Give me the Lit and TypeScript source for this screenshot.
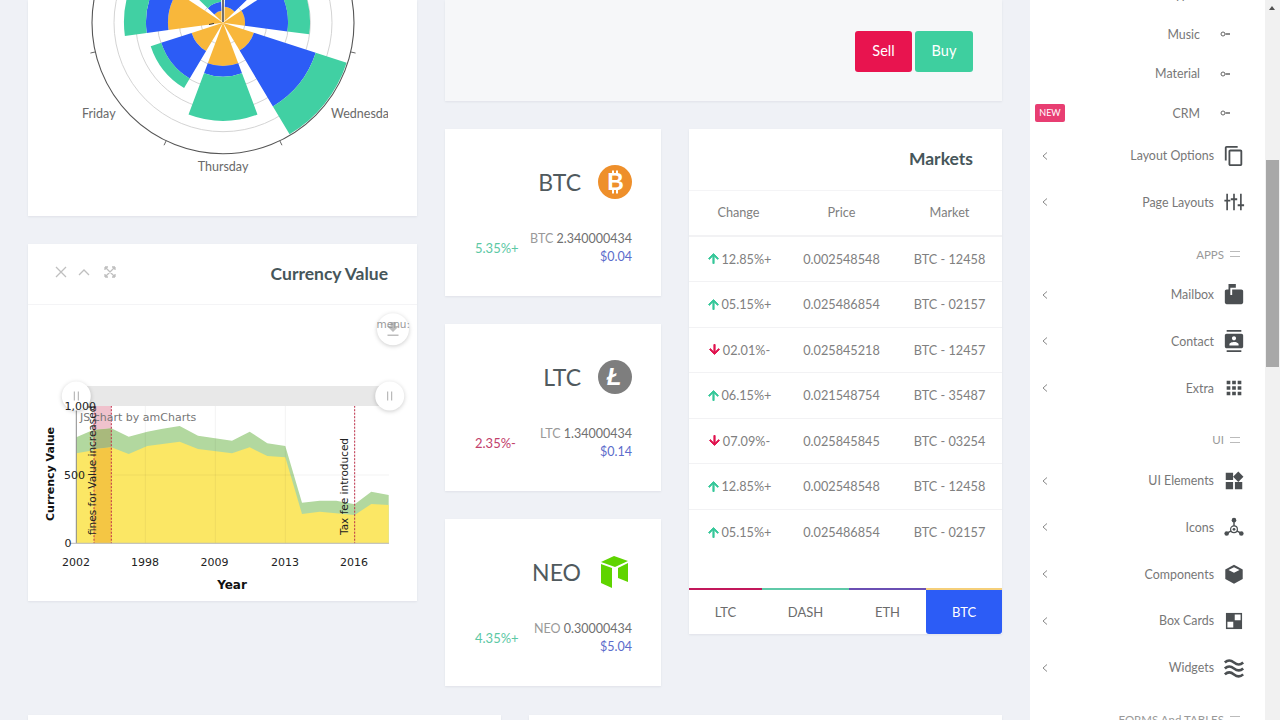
import { LitElement, html, svg, css } from 'lit';
import { customElement } from 'lit/decorators.js';

// --- polar chart helpers ---
const CX = 195;
const CY = 22.7;

const polar = (r: number, deg: number) => {
  const a = (deg * Math.PI) / 180;
  return [CX + r * Math.sin(a), CY - r * Math.cos(a)];
};

const sector = (r0: number, r1: number, a0: number, a1: number) => {
  const [x0, y0] = polar(r1, a0);
  const [x1, y1] = polar(r1, a1);
  const [x2, y2] = polar(r0, a1);
  const [x3, y3] = polar(r0, a0);
  return `M${x0} ${y0}A${r1} ${r1} 0 0 1 ${x1} ${y1}L${x2} ${y2}A${r0} ${r0} 0 0 0 ${x3} ${y3}Z`;
};

// center angle, then the outer radius of each stacked band
const DAYS = [
  { a: 25.7, v: [16, 75, 95] },
  { a: 77.1, v: [22, 65, 87] },
  { a: 128.6, v: [32.5, 97.5, 130] },
  { a: 180, v: [43.3, 54, 98] },
  { a: 231.4, v: [33, 65, 76] },
  { a: 282.9, v: [55, 77, 99] },
  { a: 334.3, v: [12, 21, 40] },
];
const BANDS = ['#f8b73b', '#2c5cf6', '#41d0a3'];

// --- area chart: points read off the plot, 3x scale ---
const P = (x: number, y: number) => `${(x / 3).toFixed(1)},${(y / 3 - 65).toFixed(1)}`;
const poly = (pts: number[][]) => pts.map(p => P(p[0], p[1])).join(' ');

const YELLOW = [[145, 640], [250, 622], [302, 642], [358, 618], [455, 605], [510, 627], [612, 640], [665, 622], [718, 648], [772, 652], [822, 822], [875, 815], [980, 825], [1030, 792], [1082, 795]];
const GREEN = [[145, 592], [200, 568], [250, 565], [302, 590], [358, 575], [400, 567], [455, 558], [510, 587], [612, 602], [665, 575], [718, 610], [772, 618], [822, 788], [875, 782], [925, 782], [980, 793], [1030, 755], [1082, 765]];

const COINS = [
  { name: 'BTC', logo: 'btc', change: '5.35%+', up: true, amount: '2.340000434', usd: '$0.04' },
  { name: 'LTC', logo: 'ltc', change: '2.35%-', up: false, amount: '1.34000434', usd: '$0.14' },
  { name: 'NEO', logo: 'neo', change: '4.35%+', up: true, amount: '0.30000434', usd: '$5.04' },
];

const MARKETS = [
  { change: '12.85%+', up: true, price: '0.002548548', market: 'BTC - 12458' },
  { change: '05.15%+', up: true, price: '0.025486854', market: 'BTC - 02157' },
  { change: '02.01%-', up: false, price: '0.025845218', market: 'BTC - 12457' },
  { change: '06.15%+', up: true, price: '0.021548754', market: 'BTC - 35487' },
  { change: '07.09%-', up: false, price: '0.025845845', market: 'BTC - 03254' },
  { change: '12.85%+', up: true, price: '0.002548548', market: 'BTC - 12458' },
  { change: '05.15%+', up: true, price: '0.025486854', market: 'BTC - 02157' },
];

const TABS = [
  { label: 'LTC', w: 73, color: '#c2185b', active: false },
  { label: 'DASH', w: 87, color: '#5fc9a8', active: false },
  { label: 'ETH', w: 77, color: '#6a4fb3', active: false },
  { label: 'BTC', w: 76, color: '#f5cf7a', active: true },
];

// material style 24x24 icons, plus a few drawn by hand
const ICONS: Record<string, unknown> = {
  copy: svg`<path d="M16 1H4c-1.1 0-2 .9-2 2v14h2V3h12V1zm3 4H8c-1.1 0-2 .9-2 2v14c0 1.1.9 2 2 2h11c1.1 0 2-.9 2-2V7c0-1.1-.9-2-2-2zm0 16H8V7h11v14z"/>`,
  tune: svg`<path d="M3.600 3h1.800v6.500H8v2H5.400V21H3.600v-9.500H1.500v-2h2.100zM11.100 3h1.800v5H15.500v2h-2.600v11h-1.800V10H8.500V8h2.600zM18.600 3h1.800v11.500H23v2h-2.600V21h-1.800v-4.500H16v-2h2.600z"/>`,
  mailbox: svg`<path d="M20 6H10v6H8V4h6V0H6v6H4c-1.1 0-2 .9-2 2v12c0 1.1.9 2 2 2h16c1.1 0 2-.9 2-2V8c0-1.1-.9-2-2-2z"/>`,
  contact: svg`<path d="M20 0H4v2h16V0zM4 24h16v-2H4v2zM20 4H4c-1.1 0-2 .9-2 2v12c0 1.1.9 2 2 2h16c1.1 0 2-.9 2-2V6c0-1.1-.9-2-2-2zm-8 2.750c1.240 0 2.250 1.010 2.250 2.250s-1.010 2.250-2.250 2.250S9.750 10.240 9.750 9 10.760 6.750 12 6.750zM17 17H7v-1.500c0-1.670 3.330-2.500 5-2.500s5 .83 5 2.500V17z"/>`,
  apps: svg`<path d="M4 8h4V4H4v4zm6 12h4v-4h-4v4zm-6 0h4v-4H4v4zm0-6h4v-4H4v4zm6 0h4v-4h-4v4zm6-10v4h4V4h-4zm-6 4h4V4h-4v4zm6 6h4v-4h-4v4zm0 6h4v-4h-4v4z"/>`,
  widgets: svg`<path d="M13 13v8h8v-8h-8zM3 21h8v-8H3v8zM3 3v8h8V3H3zm13.660-1.310L11 7.340 16.660 13l5.660-5.660-5.660-5.650z"/>`,
  hub: svg`<circle cx="12" cy="4.500" r="2.500"/><circle cx="4" cy="19" r="2.500"/><circle cx="20" cy="19" r="2.500"/><circle cx="12" cy="14.500" r="1.500"/><circle cx="12" cy="14.500" r="3.700" fill="none" stroke="currentColor" stroke-width="1.300"/><path fill="none" stroke="currentColor" stroke-width="1.600" d="M12 6v5M5 18.500l4-2.300M19 18.500l-4-2.300"/>`,
  cube: svg`<path d="M12 2l9.500 5v10.500L12 22.500l-9.500-5V7z"/><path fill="#fff" d="M12 4.500L18 7.600 12 10.700 6 7.600z"/>`,
  cards: svg`<path d="M3.200 3.200h17.600v17.600H3.200z"/><path fill="#fff" d="M12.800 4.800h6.400v6.400h-6.400zM4.800 12.800h6.400v6.400H4.800z"/>`,
  waves: svg`<path fill="none" stroke="currentColor" stroke-width="2.800" d="M2 6c3-2.800 6.500-2.800 10 0s7 2.800 10 0M2 12.500c3-2.800 6.500-2.800 10 0s7 2.800 10 0M2 19c3-2.800 6.500-2.800 10 0s7 2.800 10 0"/>`,
};

const SUB_ITEMS = ['Crypto', 'Music', 'Material', 'CRM'];

const NAV = [
  { group: '', items: [['Layout Options', 'copy'], ['Page Layouts', 'tune']] },
  { group: 'APPS', items: [['Mailbox', 'mailbox'], ['Contact', 'contact'], ['Extra', 'apps']] },
  { group: 'UI', items: [['UI Elements', 'widgets'], ['Icons', 'hub'], ['Components', 'cube'], ['Box Cards', 'cards'], ['Widgets', 'waves']] },
  { group: 'FORMS And TABLES', items: [] },
];

@customElement('app-root')
export class AppRoot extends LitElement {
  static styles = css`
    :host {
      display: block;
      width: 1280px;
      height: 720px;
      overflow: hidden;
      background: #eff1f6;
      font-family: Lato, 'Open Sans', sans-serif;
      color: #777;
    }
    .page {
      display: grid;
      grid-template-columns: 1030px 235px 15px;
      height: 720px;
    }
    .main {
      padding: 0 28px;
    }
    .card {
      background: #fff;
      box-shadow: 0 1px 2px rgba(90, 100, 120, 0.1);
    }
    .columns {
      display: grid;
      grid-template-columns: 389px 557px;
      gap: 28px;
    }
    .stack {
      display: flex;
      flex-direction: column;
      gap: 28px;
    }
    .polar {
      height: 216px;
    }
    .polar svg {
      display: block;
      width: 360px;
      height: 216px;
    }
    .polar text {
      font-size: 12.5px;
      fill: #6a6a6a;
    }
    .currency {
      height: 357px;
    }
    .card-head {
      display: flex;
      align-items: center;
      justify-content: space-between;
      height: 61px;
      padding: 0 29px 0 27px;
      border-bottom: 1px solid #f4f4f6;
      box-sizing: border-box;
    }
    .card-head svg {
      display: block;
      margin-top: -4px;
    }
    .title {
      font-size: 17.5px;
      font-weight: 700;
      color: #46565a;
      margin-top: -2px;
    }
    .area {
      display: block;
      width: 389px;
      height: 296px;
    }
    .area text {
      font-family: 'DejaVu Sans', sans-serif;
      font-size: 11px;
      fill: #222;
    }
    .area .axis {
      font-weight: 700;
      fill: #111;
    }
    .area .credit {
      fill: #777;
    }
    .area .note {
      font-size: 10.5px;
    }
    .area .menu-label {
      font-size: 10.5px;
      fill: #999;
    }
    .area .year {
      font-size: 12px;
    }
    .area .value {
      font-size: 11px;
    }
    .handle {
      filter: drop-shadow(0 1px 2px rgba(0, 0, 0, 0.2));
    }
    .trade {
      display: flex;
      justify-content: flex-end;
      gap: 3px;
      height: 101px;
      box-sizing: border-box;
      padding: 31px 29px 0 0;
      background: #f6f7f9;
    }
    .trade button {
      height: 41px;
      padding: 0 0 2px;
      border: 0;
      border-radius: 3px;
      font: inherit;
      font-size: 14.5px;
      color: #fff;
    }
    .sell {
      width: 57px;
      background: #e8144f;
    }
    .buy {
      width: 58px;
      background: #3ecf9f;
    }
    .lower {
      display: grid;
      grid-template-columns: 216px 313px;
      gap: 28px;
      align-items: start;
    }
    .coin {
      height: 167px;
      box-sizing: border-box;
      padding: 35px 29px 0 30px;
    }
    .coin-top {
      display: flex;
      align-items: center;
      justify-content: flex-end;
      gap: 17px;
      height: 36px;
      font-size: 23px;
      color: #505a5e;
    }
    .coin-top svg {
      display: block;
    }
    .coin-bottom {
      display: flex;
      justify-content: space-between;
      align-items: center;
      margin-top: 30px;
      font-size: 13px;
      line-height: 18px;
    }
    .up {
      color: #5cc8a4;
    }
    .down {
      color: #c2406b;
    }
    .amount {
      text-align: right;
      color: #707070;
      font-size: 12.5px;
    }
    .amount span {
      color: #999;
    }
    .usd {
      color: #5c6ccb;
    }
    .markets {
      height: 505px;
      display: flex;
      flex-direction: column;
    }
    .markets .card-head {
      justify-content: flex-end;
      height: 61.5px;
    }
    .grid-row {
      display: grid;
      grid-template-columns: 99px 107px 107px;
      align-items: center;
      text-align: center;
      font-size: 12.7px;
      color: #808080;
      height: 45.5px;
      box-sizing: border-box;
      border-bottom: 1px solid #f2f2f4;
    }
    .grid-row > span:last-child {
      padding-left: 2px;
    }
    .rows .grid-row:last-child {
      border-bottom: 0;
    }
    .grid-row.heading {
      height: 46px;
      padding-bottom: 2px;
      border-bottom: 2px solid #f2f2f4;
    }
    .change {
      display: flex;
      align-items: center;
      justify-content: center;
      gap: 1px;
    }
    .change svg {
      display: block;
      flex: none;
    }
    .rows {
      flex: 1;
    }
    .tabs {
      display: flex;
      height: 46px;
      font-size: 13px;
      color: #6c6c6c;
    }
    .tab {
      box-sizing: border-box;
      display: flex;
      align-items: center;
      justify-content: center;
      border-top: 2px solid;
    }
    .tab.active {
      background: #2c5cf6;
      color: #fff;
      border-radius: 0 0 3px 3px;
    }
    .bottom {
      display: grid;
      grid-template-columns: 473px 473px;
      gap: 28px;
      margin-top: 29px;
    }
    .bottom .card {
      height: 100px;
    }
    .sidebar {
      background: #fff;
      overflow: hidden;
      font-size: 12.4px;
      color: #777;
    }
    .subs {
      margin-top: -24.8px;
      margin-bottom: -1px;
    }
    .sub {
      position: relative;
      display: flex;
      align-items: center;
      justify-content: flex-end;
      height: 39.5px;
      padding-right: 35px;
      gap: 20px;
    }
    .sub svg {
      display: block;
      width: 10px;
      height: 6px;
    }
    .badge {
      position: absolute;
      left: 5px;
      top: 10px;
      width: 30px;
      height: 18px;
      border-radius: 2px;
      background: #e83e72;
      color: #fff;
      font-size: 9px;
      line-height: 18px;
      text-align: center;
    }
    .group {
      box-sizing: border-box;
      height: 45.5px;
      padding: 11px 25px 0 0;
      display: flex;
      align-items: center;
      justify-content: flex-end;
      gap: 6px;
      font-size: 11.5px;
      color: #999;
    }
    .group i {
      display: block;
      width: 10px;
      height: 4px;
      border-top: 1px solid #bbb;
      border-bottom: 1px solid #bbb;
    }
    .item {
      display: flex;
      align-items: center;
      height: 46.8px;
      padding: 0 20.5px 0 12px;
    }
    .item .chev {
      display: block;
      margin-right: auto;
    }
    .item .icon {
      display: block;
      width: 22px;
      height: 22px;
      margin-left: 8.5px;
      fill: currentColor;
      color: #4b4f52;
    }
    .scroll {
      position: relative;
      background: #f1f1f1;
    }
    .thumb {
      position: absolute;
      left: 1px;
      right: 1px;
      top: 160px;
      height: 207px;
      background: #a8a8a8;
    }
    .arrow {
      position: absolute;
      left: 4px;
      width: 0;
      height: 0;
      border-left: 3.5px solid transparent;
      border-right: 3.5px solid transparent;
    }
    .arrow.top {
      top: 6px;
      border-bottom: 4px solid #505050;
    }
    .arrow.end {
      bottom: 7px;
      border-top: 4px solid #505050;
    }
  `;

  private polarChart() {
    const rings = [21.8, 43.7, 65.5, 87.3, 109];
    const ticks = [25.7, 77.1, 102.9, 154.3, 205.7, 257.1, 282.9, 334.3];
    return html`<svg viewBox="0 0 360 216">
      ${rings.map(r => svg`<circle cx=${CX} cy=${CY} r=${r} fill="none" stroke="#d4d4d4"/>`)}
      ${DAYS.map(d =>
        d.v.map((r, i) => svg`<path d=${sector(i ? d.v[i - 1] : 0, r, d.a - 20.6, d.a + 20.6)} fill=${BANDS[i]}/>`),
      )}
      <circle cx=${CX} cy=${CY} r="131" fill="none" stroke="#555" stroke-width="1.1"/>
      ${ticks.map(a => {
        const [x0, y0] = polar(131, a);
        const [x1, y1] = polar(136, a);
        return svg`<line x1=${x0} y1=${y0} x2=${x1} y2=${y1} stroke="#666"/>`;
      })}
      <rect x="193.5" y="0" width="3" height="22" fill="#fff"/>
      <line x1="195" y1="0" x2="195" y2="22" stroke="#111" stroke-width="1.2"/>
      <line x1="181" y1="24.5" x2="186" y2="23.5" stroke="#333" stroke-width="1"/>
      <text x="54" y="118">Friday</text>
      <text x="195" y="171" text-anchor="middle">Thursday</text>
      <text x="303" y="118">Wednesday</text>
    </svg>`;
  }

  private areaChart() {
    return html`<svg class="area" viewBox="0 0 389 296">
      <polygon fill="#b2d89f" points=${poly([[145, 910], ...GREEN, [1082, 910]])}/>
      <polygon fill="#fbe765" points=${poly([[145, 910], ...YELLOW, [1082, 910]])}/>
      ${[352, 562, 772, 980].map(x => svg`<line x1=${x / 3} x2=${x / 3} y1="100.7" y2="238.3" stroke="#000" stroke-opacity=".05"/>`)}
      <line x1="48.3" x2="361" y1="170" y2="170" stroke="#000" stroke-opacity=".05"/>
      <polygon fill="#f0c2cd" points=${poly([[198, 497], [250, 497], [250, 565], [198, 570]])}/>
      <polygon fill="#a9b97c" points=${poly([[198, 570], [250, 565], [250, 622], [198, 627]])}/>
      <polygon fill="#f4c644" points=${poly([[198, 627], [250, 622], [250, 910], [198, 910]])}/>
      ${[198, 250, 980].map(x => svg`<line x1=${x / 3} x2=${x / 3} y1="100.7" y2="238.3" stroke="#c0304a" stroke-dasharray="2 1.5"/>`)}
      <line x1="48.3" x2="48.3" y1="100.7" y2="238.3" stroke="#8a8a8a"/>
      <line x1="42" x2="361" y1="238.3" y2="238.3" stroke="#bbb"/>
      <rect x="48" y="81" width="314" height="20" fill="#e8e8e8"/>
      ${[48.3, 361.7].map(
        x => svg`<circle class="handle" cx=${x} cy="91" r="14.5" fill="#fff"/>
          <path d="M${x - 2} 86.5v9M${x + 2} 86.5v9" stroke="#aaa" fill="none"/>`,
      )}
      <text class="credit" x="52" y="116">JS chart by amCharts</text>
      <text class="note" transform="translate(68 230) rotate(-90)">fines for Value increased</text>
      <text class="note" transform="translate(319.5 230) rotate(-90)">Tax fee introduced</text>
      <text x="36.5" y="105">1,000</text>
      <text x="36" y="174">500</text>
      <text x="36.5" y="242">0</text>
      ${[['2002', 48], ['1998', 117], ['2009', 186.5], ['2013', 257], ['2016', 326]].map(
        ([t, x]) => svg`<text x=${x} y="261" text-anchor="middle">${t}</text>`,
      )}
      <text class="axis year" x="204" y="283.5" text-anchor="middle">Year</text>
      <text class="axis value" transform="translate(26 169) rotate(-90)" text-anchor="middle">Currency Value</text>
      <circle class="handle" cx="365" cy="24.3" r="16" fill="#fff"/>
      <path d="M362.500 17h5v4h3.500l-6 6-6-6h3.500zM359.500 29.500h11v1.500h-11z" fill="#bdbdbd"/>
      <text class="menu-label" x="348.5" y="23">menu:</text>
    </svg>`;
  }

  private coinLogo(kind: string) {
    if (kind === 'btc') {
      return html`<svg width="34" height="34" viewBox="0 0 34 34">
        <circle cx="17" cy="17" r="17" fill="#ee8f2b"/>
        <text x="17.5" y="25.2" text-anchor="middle" font-family="Liberation Sans" font-weight="700" font-size="23" fill="#fff">B</text>
        <path d="M15 5.5v3.500M19 5.5v3.500M15 25v3.500M19 25v3.500" stroke="#fff" stroke-width="2"/>
      </svg>`;
    }
    if (kind === 'ltc') {
      return html`<svg width="34" height="34" viewBox="0 0 34 34">
        <circle cx="17" cy="17" r="17" fill="#7e7e7e"/>
        <text x="16" y="25" text-anchor="middle" font-family="Liberation Sans" font-style="italic" font-weight="700" font-size="24" fill="#fff">Ł</text>
      </svg>`;
    }
    return html`<svg width="34" height="34" viewBox="0 0 34 34">
      <g fill="#5fd400">
        <polygon points="3,7 16,1 30,6 17,12"/>
        <polygon points="3,9 14,13 14,33 3,28"/>
        <polygon points="20,13 30,8 30,27 20,23"/>
      </g>
    </svg>`;
  }

  private arrow(up: boolean) {
    return html`<svg width="15" height="15" viewBox="0 0 24 24">
      <path
        fill=${up ? '#38c79a' : '#e0144f'}
        stroke=${up ? '#38c79a' : '#e0144f'}
        stroke-width="1.5"
        transform=${up ? '' : 'rotate(180 12 12)'}
        d="M4 12l1.410 1.410L11 7.830V20h2V7.830l5.580 5.590L20 12l-8-8-8 8z"
      />
    </svg>`;
  }

  private sidebar() {
    return html`<aside class="sidebar">
      <div class="subs">
        ${SUB_ITEMS.map(
          name => html`<div class="sub">
            ${name === 'CRM' ? html`<span class="badge">NEW</span>` : ''}
            ${name}
            <svg viewBox="0 0 10 6"><circle cx="3" cy="3" r="2" fill="none" stroke="#666"/><path d="M5.5 3H10" stroke="#666" stroke-width="1.5"/></svg>
          </div>`,
        )}
      </div>
      ${NAV.map(
        sec => html`
          ${sec.group ? html`<div class="group">${sec.group}<i></i></div>` : ''}
          ${sec.items.map(
            ([label, icon]) => html`<div class="item">
              <svg class="chev" width="6" height="8" viewBox="0 0 6 8"><path d="M5 .5L1 4l4 3.5" fill="none" stroke="#888"/></svg>
              ${label}
              <svg class="icon" viewBox="0 0 24 24">${ICONS[icon]}</svg>
            </div>`,
          )}
        `,
      )}
    </aside>`;
  }

  render() {
    return html`<div class="page">
      <div class="main">
        <div class="columns">
          <div class="stack">
            <section class="card polar">${this.polarChart()}</section>
            <section class="card currency">
              <div class="card-head">
                <svg width="66" height="12" viewBox="0 0 66 12" fill="none" stroke="#bfbfbf" stroke-width="1.3">
                  <path d="M1 1l10 10M11 1L1 11"/>
                  <path d="M24 9l5-5 5 5"/>
                  <path d="M50 1h3M50 1v3M50 1l10 10M60 11h-3M60 11v-3M60 1h-3M60 1v3M60 1L50 11M50 11h3M50 11v-3"/>
                </svg>
                <span class="title">Currency Value</span>
              </div>
              ${this.areaChart()}
            </section>
          </div>
          <div class="stack">
            <section class="card trade">
              <button class="sell">Sell</button>
              <button class="buy">Buy</button>
            </section>
            <div class="lower">
              <div class="stack">
                ${COINS.map(
                  c => html`<section class="card coin">
                    <div class="coin-top">${c.name}${this.coinLogo(c.logo)}</div>
                    <div class="coin-bottom">
                      <span class=${c.up ? 'up' : 'down'}>${c.change}</span>
                      <div class="amount">
                        <span>${c.name}</span> ${c.amount}
                        <div class="usd">${c.usd}</div>
                      </div>
                    </div>
                  </section>`,
                )}
              </div>
              <section class="card markets">
                <div class="card-head"><span class="title">Markets</span></div>
                <div class="grid-row heading"><span>Change</span><span>Price</span><span>Market</span></div>
                <div class="rows">
                  ${MARKETS.map(
                    m => html`<div class="grid-row">
                      <span class="change">${this.arrow(m.up)}${m.change}</span>
                      <span>${m.price}</span>
                      <span>${m.market}</span>
                    </div>`,
                  )}
                </div>
                <div class="tabs">
                  ${TABS.map(
                    t => html`<div
                      class="tab ${t.active ? 'active' : ''}"
                      style="width:${t.w}px;border-top-color:${t.color}"
                    >
                      ${t.label}
                    </div>`,
                  )}
                </div>
              </section>
            </div>
          </div>
        </div>
        <div class="bottom">
          <section class="card"></section>
          <section class="card"></section>
        </div>
      </div>
      ${this.sidebar()}
      <div class="scroll">
        <div class="arrow top"></div>
        <div class="thumb"></div>
        <div class="arrow end"></div>
      </div>
    </div>`;
  }
}
